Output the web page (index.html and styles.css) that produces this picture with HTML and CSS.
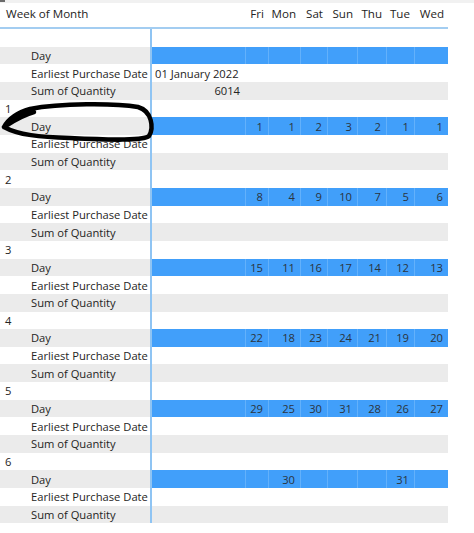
FILE: index.html
```html
<!DOCTYPE html>
<html lang="en">
<head>
<meta charset="utf-8">
<title>Week of Month matrix</title>
<link rel="stylesheet" href="styles.css">
</head>
<body>
<div class="page">
  <div class="topstrip"><span class="mark"></span></div>
  <div class="header">
    <div class="h-label">Week of Month</div>
    <div class="h-cell"></div>
    <div class="h-cell">Fri</div>
    <div class="h-cell">Mon</div>
    <div class="h-cell">Sat</div>
    <div class="h-cell">Sun</div>
    <div class="h-cell">Thu</div>
    <div class="h-cell">Tue</div>
    <div class="h-cell">Wed</div>
  </div>
  <div class="body">
    <div class="row group"><div class="lbl"></div><div class="c first"></div><div class="c"></div><div class="c"></div><div class="c"></div><div class="c"></div><div class="c"></div><div class="c"></div><div class="c"></div></div>
    <div class="row day"><div class="lbl sub">Day</div><div class="c first"></div><div class="c"></div><div class="c"></div><div class="c"></div><div class="c"></div><div class="c"></div><div class="c"></div><div class="c"></div></div>
    <div class="row plain"><div class="lbl sub">Earliest Purchase Date</div><div class="c first left">01 January 2022</div><div class="c"></div><div class="c"></div><div class="c"></div><div class="c"></div><div class="c"></div><div class="c"></div><div class="c"></div></div>
    <div class="row shade"><div class="lbl sub">Sum of Quantity</div><div class="c first">6014</div><div class="c"></div><div class="c"></div><div class="c"></div><div class="c"></div><div class="c"></div><div class="c"></div><div class="c"></div></div>

    <div class="row group"><div class="lbl">1</div><div class="c first"></div><div class="c"></div><div class="c"></div><div class="c"></div><div class="c"></div><div class="c"></div><div class="c"></div><div class="c"></div></div>
    <div class="row day"><div class="lbl sub">Day</div><div class="c first"></div><div class="c">1</div><div class="c">1</div><div class="c">2</div><div class="c">3</div><div class="c">2</div><div class="c">1</div><div class="c">1</div></div>
    <div class="row plain"><div class="lbl sub">Earliest Purchase Date</div><div class="c first"></div><div class="c"></div><div class="c"></div><div class="c"></div><div class="c"></div><div class="c"></div><div class="c"></div><div class="c"></div></div>
    <div class="row shade"><div class="lbl sub">Sum of Quantity</div><div class="c first"></div><div class="c"></div><div class="c"></div><div class="c"></div><div class="c"></div><div class="c"></div><div class="c"></div><div class="c"></div></div>

    <div class="row group"><div class="lbl">2</div><div class="c first"></div><div class="c"></div><div class="c"></div><div class="c"></div><div class="c"></div><div class="c"></div><div class="c"></div><div class="c"></div></div>
    <div class="row day"><div class="lbl sub">Day</div><div class="c first"></div><div class="c">8</div><div class="c">4</div><div class="c">9</div><div class="c">10</div><div class="c">7</div><div class="c">5</div><div class="c">6</div></div>
    <div class="row plain"><div class="lbl sub">Earliest Purchase Date</div><div class="c first"></div><div class="c"></div><div class="c"></div><div class="c"></div><div class="c"></div><div class="c"></div><div class="c"></div><div class="c"></div></div>
    <div class="row shade"><div class="lbl sub">Sum of Quantity</div><div class="c first"></div><div class="c"></div><div class="c"></div><div class="c"></div><div class="c"></div><div class="c"></div><div class="c"></div><div class="c"></div></div>

    <div class="row group"><div class="lbl">3</div><div class="c first"></div><div class="c"></div><div class="c"></div><div class="c"></div><div class="c"></div><div class="c"></div><div class="c"></div><div class="c"></div></div>
    <div class="row day"><div class="lbl sub">Day</div><div class="c first"></div><div class="c">15</div><div class="c">11</div><div class="c">16</div><div class="c">17</div><div class="c">14</div><div class="c">12</div><div class="c">13</div></div>
    <div class="row plain"><div class="lbl sub">Earliest Purchase Date</div><div class="c first"></div><div class="c"></div><div class="c"></div><div class="c"></div><div class="c"></div><div class="c"></div><div class="c"></div><div class="c"></div></div>
    <div class="row shade"><div class="lbl sub">Sum of Quantity</div><div class="c first"></div><div class="c"></div><div class="c"></div><div class="c"></div><div class="c"></div><div class="c"></div><div class="c"></div><div class="c"></div></div>

    <div class="row group"><div class="lbl">4</div><div class="c first"></div><div class="c"></div><div class="c"></div><div class="c"></div><div class="c"></div><div class="c"></div><div class="c"></div><div class="c"></div></div>
    <div class="row day"><div class="lbl sub">Day</div><div class="c first"></div><div class="c">22</div><div class="c">18</div><div class="c">23</div><div class="c">24</div><div class="c">21</div><div class="c">19</div><div class="c">20</div></div>
    <div class="row plain"><div class="lbl sub">Earliest Purchase Date</div><div class="c first"></div><div class="c"></div><div class="c"></div><div class="c"></div><div class="c"></div><div class="c"></div><div class="c"></div><div class="c"></div></div>
    <div class="row shade"><div class="lbl sub">Sum of Quantity</div><div class="c first"></div><div class="c"></div><div class="c"></div><div class="c"></div><div class="c"></div><div class="c"></div><div class="c"></div><div class="c"></div></div>

    <div class="row group"><div class="lbl">5</div><div class="c first"></div><div class="c"></div><div class="c"></div><div class="c"></div><div class="c"></div><div class="c"></div><div class="c"></div><div class="c"></div></div>
    <div class="row day"><div class="lbl sub">Day</div><div class="c first"></div><div class="c">29</div><div class="c">25</div><div class="c">30</div><div class="c">31</div><div class="c">28</div><div class="c">26</div><div class="c">27</div></div>
    <div class="row plain"><div class="lbl sub">Earliest Purchase Date</div><div class="c first"></div><div class="c"></div><div class="c"></div><div class="c"></div><div class="c"></div><div class="c"></div><div class="c"></div><div class="c"></div></div>
    <div class="row shade"><div class="lbl sub">Sum of Quantity</div><div class="c first"></div><div class="c"></div><div class="c"></div><div class="c"></div><div class="c"></div><div class="c"></div><div class="c"></div><div class="c"></div></div>

    <div class="row group"><div class="lbl">6</div><div class="c first"></div><div class="c"></div><div class="c"></div><div class="c"></div><div class="c"></div><div class="c"></div><div class="c"></div><div class="c"></div></div>
    <div class="row day"><div class="lbl sub">Day</div><div class="c first"></div><div class="c"></div><div class="c">30</div><div class="c"></div><div class="c"></div><div class="c"></div><div class="c">31</div><div class="c"></div></div>
    <div class="row plain"><div class="lbl sub">Earliest Purchase Date</div><div class="c first"></div><div class="c"></div><div class="c"></div><div class="c"></div><div class="c"></div><div class="c"></div><div class="c"></div><div class="c"></div></div>
    <div class="row shade"><div class="lbl sub">Sum of Quantity</div><div class="c first"></div><div class="c"></div><div class="c"></div><div class="c"></div><div class="c"></div><div class="c"></div><div class="c"></div><div class="c"></div></div>
  </div>

  <svg class="scribble" width="160" height="50" viewBox="0 100 160 50" aria-hidden="true">
    <path d="M4 127 C8 120 16 113 30 109 C60 103 115 103 138 107 C152 111 154 128 149 136 C143 141 110 140 70 138 C40 137 18 135 4 127 Z M4 127 C12 122 20 116 34 112" fill="none" stroke="#000" stroke-width="4.5" stroke-linecap="round" stroke-linejoin="round"/>
  </svg>
</div>
</body>
</html>
```

FILE: styles.css
```css
html, body {
  margin: 0;
  padding: 0;
  background: #ffffff;
}

.page {
  position: relative;
  width: 474px;
  height: 533px;
  overflow: hidden;
  font-family: "Open Sans", "Noto Sans", "Liberation Sans", sans-serif;
  font-size: 11.2px;
  color: #252423;
}

.topstrip {
  height: 3px;
  background: #f1f1f1;
  display: flex;
}

.mark {
  width: 5px;
  height: 2px;
  background: #6b6b6b;
}

.header {
  box-sizing: border-box;
  display: grid;
  grid-template-columns: 150px 95px 23px 32px 27px 30px 29px 28px 34px;
  width: 448px;
  height: 26px;
  padding-bottom: 4px;
  align-items: center;
  border-bottom: 2px solid #a3cdf1;
  font-size: 11.6px;
}

.h-label {
  padding-left: 6px;
  white-space: nowrap;
}

.h-cell {
  text-align: right;
  padding-right: 4px;
  white-space: nowrap;
}

.body {
  width: 448px;
}

.row {
  display: grid;
  grid-template-columns: 150px 95px 23px 32px 27px 30px 29px 28px 34px;
  height: 17.67px;
  align-items: stretch;
  font-size: 11.2px;
}

.lbl {
  display: flex;
  align-items: center;
  padding-left: 5px;
  white-space: nowrap;
  overflow: visible;
}

.lbl.sub {
  padding-left: 31px;
}

.c {
  display: flex;
  align-items: center;
  justify-content: flex-end;
  padding-right: 5px;
  white-space: nowrap;
}

.c.first {
  border-left: 2px solid #8fc4f3;
}

.c.left {
  justify-content: flex-start;
  padding-left: 3px;
}

.row.day .lbl,
.row.shade .lbl,
.row.shade .c {
  background: #ebebeb;
}

.row.day .c {
  background: #419ffa;
  box-shadow: inset 1px 0 0 #63b1fb;
  color: #2b3440;
}

.row.day .c.first {
  box-shadow: none;
}

.scribble {
  position: absolute;
  left: 0;
  top: 100px;
  pointer-events: none;
}
```
